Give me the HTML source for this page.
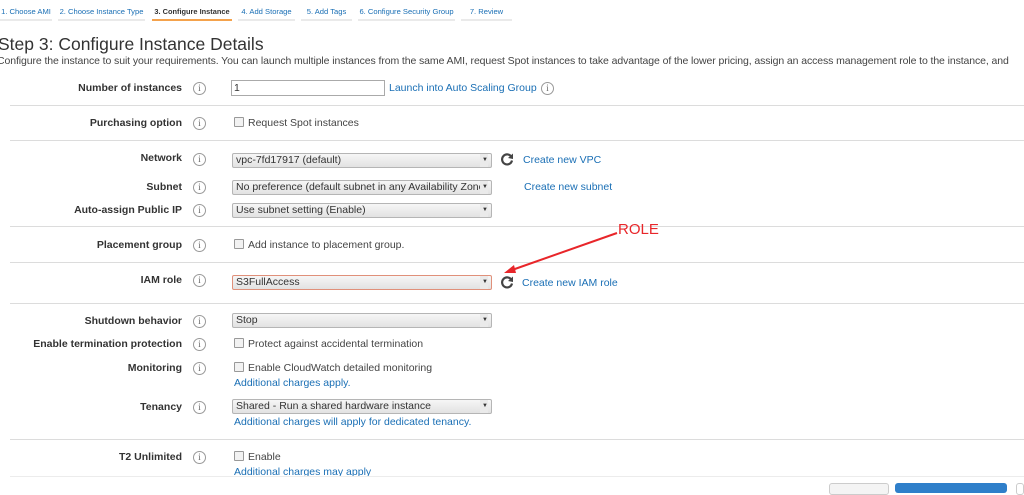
<!DOCTYPE html>
<html><head><meta charset="utf-8"><style>
body{margin:0;width:1024px;height:486px;overflow:hidden;background:#fff;font-family:"Liberation Sans",Arial,sans-serif;position:relative;color:#444}
.a{position:absolute;white-space:nowrap}
.tab{position:absolute;top:0;height:19px;border-bottom:2px solid #eaeaea;font-size:7.6px;color:#1a6fb5;line-height:24px;text-align:center;white-space:nowrap;overflow:visible}
.lbl{position:absolute;right:842px;font-size:10.5px;font-weight:bold;color:#333;white-space:nowrap}
.i{position:absolute;left:193px;width:11px;height:11px;border:1px solid #999;border-radius:50%;font-size:9px;line-height:11px;text-align:center;color:#666;font-family:"Liberation Serif",serif}
.sel{position:absolute;left:232px;width:255px;height:13px;border:1px solid #b5b5b5;border-radius:2px;background:linear-gradient(#f6f6f6,#e2e2e2);font-size:10.5px;line-height:13px;padding-left:3px;box-sizing:content-box;overflow:hidden;white-space:nowrap;color:#333}
.sel:after{content:"▼";position:absolute;right:3px;top:0;font-size:6px;background:#eaeaea;padding-left:2px}
.ln{position:absolute;left:10px;right:0;height:1px;background:#dcdcdc}
.cb{display:inline-block;width:8px;height:8px;border:1px solid #999;border-radius:1px;background:#f2f2f2;vertical-align:-1px;margin-right:4px}
.t{position:absolute;left:234px;font-size:10.5px;color:#444;white-space:nowrap}
.lk{position:absolute;font-size:10.5px;color:#1a6fb5;white-space:nowrap}
.rf{position:absolute;left:500px}
</style></head><body>
<div class="tab" style="left:0;width:52px">1. Choose AMI</div>
<div class="tab" style="left:58px;width:87px">2. Choose Instance Type</div>
<div class="tab" style="left:152px;width:80px;color:#333;font-weight:bold;border-bottom-color:#f4a24c;font-size:7.4px">3. Configure Instance</div>
<div class="tab" style="left:238px;width:57px">4. Add Storage</div>
<div class="tab" style="left:301px;width:51px">5. Add Tags</div>
<div class="tab" style="left:358px;width:97px">6. Configure Security Group</div>
<div class="tab" style="left:461px;width:51px">7. Review</div>

<div class="a" style="left:-2px;top:34px;font-size:17.5px;color:#333">Step 3: Configure Instance Details</div>
<div class="a" style="left:-3px;top:55px;font-size:10.5px;letter-spacing:-0.1px;color:#444">Configure the instance to suit your requirements. You can launch multiple instances from the same AMI, request Spot instances to take advantage of the lower pricing, assign an access management role to the instance, and</div>

<div class="lbl" style="top:82px">Number of instances</div><div class="i" style="top:82px">i</div>
<div class="a" style="left:231px;top:80px;width:150px;height:14px;border:1px solid #aaa;font-size:10.5px;line-height:14px;padding-left:2px;color:#333">1</div>
<div class="lk" style="left:389px;top:82px">Launch into Auto Scaling Group</div><div class="i" style="top:82px;left:541px">i</div>
<div class="ln" style="top:105px"></div>

<div class="lbl" style="top:117px">Purchasing option</div><div class="i" style="top:117px">i</div>
<div class="t" style="top:117px"><span class="cb"></span>Request Spot instances</div>
<div class="ln" style="top:140px"></div>

<div class="lbl" style="top:152px">Network</div><div class="i" style="top:153px">i</div>
<div class="sel" style="top:153px">vpc-7fd17917 (default)</div>
<svg class="rf" style="top:152px" width="14" height="14" viewBox="0 0 14 14"><path d="M11.5 5A5 5 0 1 0 12 8.5" fill="none" stroke="#444" stroke-width="2.2"/><polygon points="13,1.5 13,7 8,6" fill="#444"/></svg>
<div class="lk" style="left:523px;top:154px">Create new VPC</div>

<div class="lbl" style="top:181px">Subnet</div><div class="i" style="top:181px">i</div>
<div class="sel" style="top:180px">No preference (default subnet in any Availability Zone</div>
<div class="lk" style="left:524px;top:181px">Create new subnet</div>

<div class="lbl" style="top:204px">Auto-assign Public IP</div><div class="i" style="top:204px">i</div>
<div class="sel" style="top:203px">Use subnet setting (Enable)</div>
<div class="ln" style="top:226px"></div>

<div class="lbl" style="top:239px">Placement group</div><div class="i" style="top:239px">i</div>
<div class="t" style="top:239px"><span class="cb"></span>Add instance to placement group.</div>
<div class="ln" style="top:262px"></div>

<div class="lbl" style="top:274px">IAM role</div><div class="i" style="top:274px">i</div>
<div class="sel" style="top:275px;border-color:#e0907a">S3FullAccess</div>
<svg class="rf" style="top:275px" width="14" height="14" viewBox="0 0 14 14"><path d="M11.5 5A5 5 0 1 0 12 8.5" fill="none" stroke="#444" stroke-width="2.2"/><polygon points="13,1.5 13,7 8,6" fill="#444"/></svg>
<div class="lk" style="left:522px;top:277px">Create new IAM role</div>

<div class="a" style="left:618px;top:221px;font-size:15px;color:#e8262a">ROLE</div>
<svg class="a" style="left:0;top:0" width="1024" height="486"><line x1="617" y1="233" x2="512" y2="270" stroke="#e8262a" stroke-width="2"/><polygon points="504,273 514,265 516,273" fill="#e8262a"/></svg>
<div class="ln" style="top:303px"></div>

<div class="lbl" style="top:315px">Shutdown behavior</div><div class="i" style="top:315px">i</div>
<div class="sel" style="top:313px">Stop</div>
<div class="lbl" style="top:338px">Enable termination protection</div><div class="i" style="top:338px">i</div>
<div class="t" style="top:338px"><span class="cb"></span>Protect against accidental termination</div>
<div class="lbl" style="top:362px">Monitoring</div><div class="i" style="top:362px">i</div>
<div class="t" style="top:362px"><span class="cb"></span>Enable CloudWatch detailed monitoring</div>
<div class="lk" style="left:234px;top:377px">Additional charges apply.</div>

<div class="lbl" style="top:401px">Tenancy</div><div class="i" style="top:401px">i</div>
<div class="sel" style="top:399px">Shared - Run a shared hardware instance</div>
<div class="lk" style="left:234px;top:416px">Additional charges will apply for dedicated tenancy.</div>
<div class="ln" style="top:439px"></div>

<div class="lbl" style="top:451px">T2 Unlimited</div><div class="i" style="top:451px">i</div>
<div class="t" style="top:451px"><span class="cb"></span>Enable</div>
<div class="lk" style="left:234px;top:466px">Additional charges may apply</div>
<div class="ln" style="top:476px;background:#ececec"></div>
<div class="a" style="left:829px;top:483px;width:58px;height:10px;border:1px solid #ccc;border-radius:3px;background:#f4f4f4"></div>
<div class="a" style="left:895px;top:483px;width:112px;height:10px;border-radius:3px;background:#2f7fca"></div>
<div class="a" style="left:1016px;top:483px;width:6px;height:10px;border:1px solid #ccc;border-radius:3px"></div>
</body></html>
